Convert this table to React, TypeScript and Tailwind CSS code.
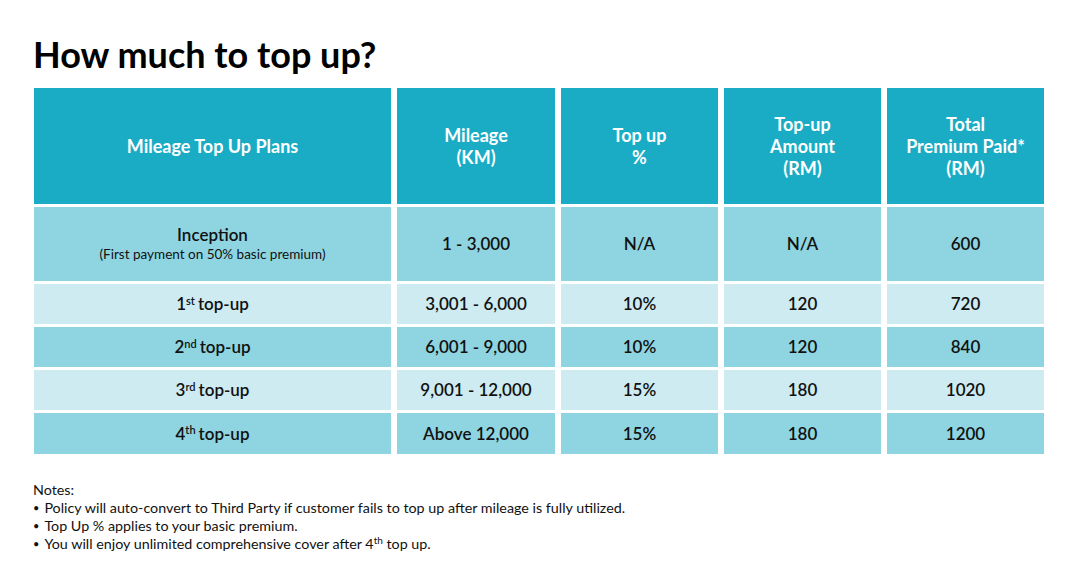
import React from "react";

const rows = [
  { plan: "1", sup: "st", km: "3,001 - 6,000", pct: "10%", amt: "120", total: "720", dark: false },
  { plan: "2", sup: "nd", km: "6,001 - 9,000", pct: "10%", amt: "120", total: "840", dark: true },
  { plan: "3", sup: "rd", km: "9,001 - 12,000", pct: "15%", amt: "180", total: "1020", dark: false },
  { plan: "4", sup: "th", km: "Above 12,000", pct: "15%", amt: "180", total: "1200", dark: true },
];

const Head = ({ children }: { children: React.ReactNode }) => (
  <div className="bg-[#1aacc5] text-white font-bold text-[18px] leading-[22px] flex items-center justify-center text-center">
    <div>{children}</div>
  </div>
);

const Cell = ({ dark, children }: { dark: boolean; children: React.ReactNode }) => (
  <div
    className={`${dark ? "bg-[#8ed5e1]" : "bg-[#cdebf1]"} flex items-center justify-center text-center text-[17px] font-semibold text-[#111]`}
  >
    {children}
  </div>
);

const App = () => {
  return (
    <div className="w-[1080px] h-[582px] bg-white pt-[34px] pl-[33px] font-['Lato',sans-serif]">
      <h1 className="text-[36px] leading-[40px] font-bold text-black">How much to top up?</h1>

      <div className="mt-[14px] ml-[1px] grid grid-cols-[357px_158px_157px_157px_157px] grid-rows-[116px_74px_40px_40px_40px_41px] gap-x-[6px] gap-y-[3px] w-[1010px]">
        <Head>Mileage Top Up Plans</Head>
        <Head>
          Mileage
          <br />
          (KM)
        </Head>
        <Head>
          Top up
          <br />%
        </Head>
        <Head>
          Top-up
          <br />
          Amount
          <br />
          (RM)
        </Head>
        <Head>
          Total
          <br />
          Premium Paid*
          <br />
          (RM)
        </Head>

        <Cell dark>
          <div>
            <div className="leading-[20px]">Inception</div>
            <div className="text-[13.5px] font-normal leading-[18px]">(First payment on 50% basic premium)</div>
          </div>
        </Cell>
        <Cell dark>1 - 3,000</Cell>
        <Cell dark>N/A</Cell>
        <Cell dark>N/A</Cell>
        <Cell dark>600</Cell>

        {rows.map((r) => (
          <React.Fragment key={r.plan}>
            <Cell dark={r.dark}>
              <span>
                {r.plan}
                <sup className="text-[11px] mr-[3px]">{r.sup}</sup>top-up
              </span>
            </Cell>
            <Cell dark={r.dark}>{r.km}</Cell>
            <Cell dark={r.dark}>{r.pct}</Cell>
            <Cell dark={r.dark}>{r.amt}</Cell>
            <Cell dark={r.dark}>{r.total}</Cell>
          </React.Fragment>
        ))}
      </div>

      <div className="mt-[27px] text-[14.3px] leading-[18px] text-[#111]">
        <p>Notes:</p>
        <ul>
          <li className="flex gap-[5px]"><span className="text-[11px]">•</span>Policy will auto-convert to Third Party if customer fails to top up after mileage is fully utilized.</li>
          <li className="flex gap-[5px]"><span className="text-[11px]">•</span>Top Up % applies to your basic premium.</li>
          <li className="flex gap-[5px]"><span className="text-[11px]">•</span><span>You will enjoy unlimited comprehensive cover after 4<sup className="text-[10px]">th</sup> top up.</span></li>
        </ul>
      </div>
    </div>
  );
};

export default App;
